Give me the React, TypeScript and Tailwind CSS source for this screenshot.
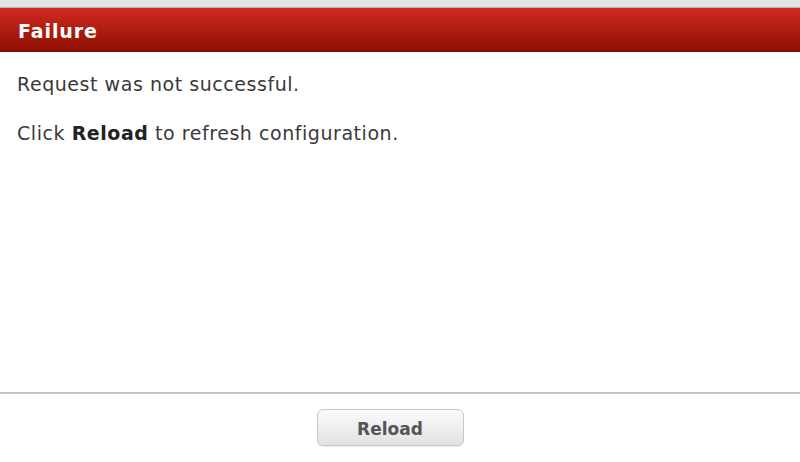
import React from 'react';

const App: React.FC = () => (
  <div className="w-[800px] h-[462px] flex flex-col bg-white font-['DejaVu_Sans',Verdana,sans-serif] overflow-hidden">
    <div className="h-[8px] bg-[#e3e3e3] border-b border-[#b4b4b4]" />
    <div className="h-[44px] flex items-center px-[18px] bg-gradient-to-b from-[#d22a20] to-[#8e0f02] border-b border-[#7a0a00]">
      <span className="text-white font-bold text-[19px] tracking-[0.9px] pt-[4px]">Failure</span>
    </div>
    <div className="flex-1 px-[17px] pt-[21px] text-[19px] tracking-[0.55px] text-[#3a3a3a]">
      <p className="leading-[22px]">Request was not successful.</p>
      <p className="leading-[22px] mt-[27px]">
        Click <b className="text-[#222]">Reload</b> to refresh configuration.
      </p>
    </div>
    <div className="h-[70px] border-t-2 border-[#c4c4c4] flex justify-center pt-[15px] pr-[20px]">
      <button className="w-[147px] h-[37px] rounded-[6px] border border-[#c8c8c8] bg-gradient-to-b from-[#fbfbfb] to-[#e2e2e2] text-[#555] font-bold text-[17px] pt-[5px] shadow-[0_1px_1px_rgba(0,0,0,0.08)]">
        Reload
      </button>
    </div>
  </div>
);

export default App;
